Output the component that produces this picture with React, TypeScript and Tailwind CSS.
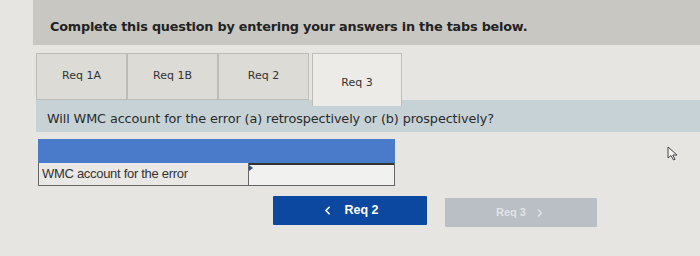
import { ChevronLeft, ChevronRight } from 'lucide-react';

const tabs = ['Req 1A', 'Req 1B', 'Req 2', 'Req 3'];

export default function App() {
  const active = 3;

  return (
    <div className="relative h-[256px] w-[700px] overflow-hidden bg-[#e6e5e1] font-['DejaVu_Sans',sans-serif]">
      <div className="ml-[33px] flex h-[45px] items-center bg-[#c8c7c2] pl-[17px] pt-[8px]">
        <p className="text-[12.8px] font-bold tracking-[-0.2px] text-[#222]">
          Complete this question by entering your answers in the tabs below.
        </p>
      </div>

      <div className="ml-[36px] mt-[8px]">
        <div className="flex h-[53px] items-start">
          {tabs.map((t, i) => (
            <button
              key={t}
              className={
                i === active
                  ? 'ml-[3px] flex h-[53px] w-[90px] items-center justify-center border border-b-0 border-[#bdbcb7] bg-[#ecebe7] pt-[6px] text-[11px] text-[#333]'
                  : 'flex h-[47px] w-[91px] items-center justify-center border border-[#bdbcb7] bg-[#dcdbd6] text-[11px] text-[#333]'
              }
            >
              {t}
            </button>
          ))}
        </div>
        <div className="-mt-[6px] flex h-[32px] items-center bg-[#c6d2d6] pl-[11px] pt-[5px]">
          <p className="text-[12.8px] tracking-[-0.1px] text-[#2a2a2a]">
            Will WMC account for the error (a) retrospectively or (b) prospectively?
          </p>
        </div>
      </div>

      <div className="ml-[38px] mt-[7px] w-[357px] font-['Liberation_Sans',sans-serif]">
        <div className="h-[24px] bg-[#4a7bcb]" />
        <div className="flex h-[23px] border border-t-0 border-[#666]">
          <div className="flex w-[210px] items-center border-r border-[#666] bg-[#e9e8e5] pl-[3px] text-[13px] tracking-[-0.3px] text-[#333]">
            WMC account for the error
          </div>
          <div className="relative flex-1 border-t-2 border-[#333] bg-[#f1f1ef]">
            <span className="absolute left-0 top-0 h-0 w-0 border-y-[3px] border-l-[4px] border-y-transparent border-l-[#2a4f8a]" />
          </div>
        </div>
      </div>

      <div className="ml-[273px] mt-[10px] flex items-start gap-[18px] font-['Liberation_Sans',sans-serif]">
        <button className="flex h-[29px] w-[154px] items-center justify-center gap-[10px] rounded-[1px] bg-[#0d48a0] text-[12.5px] font-bold text-white">
          <ChevronLeft size={13} strokeWidth={3} />
          Req 2
        </button>
        <button className="mt-[2px] flex h-[29px] w-[152px] items-center justify-center gap-[8px] rounded-[1px] bg-[#b9bfc4] text-[11px] font-bold text-[#e1e4e7]">
          Req 3
          <ChevronRight size={12} strokeWidth={3} />
        </button>
      </div>

      <svg className="absolute left-[667px] top-[146px]" width="12" height="16" viewBox="0 0 12 16">
        <path d="M1 1 L1 12 L4 9.5 L6.5 14 L8 13.3 L5.8 9 L10 9 Z" fill="#f4f4f2" stroke="#444" strokeWidth="1" />
      </svg>
    </div>
  );
}
